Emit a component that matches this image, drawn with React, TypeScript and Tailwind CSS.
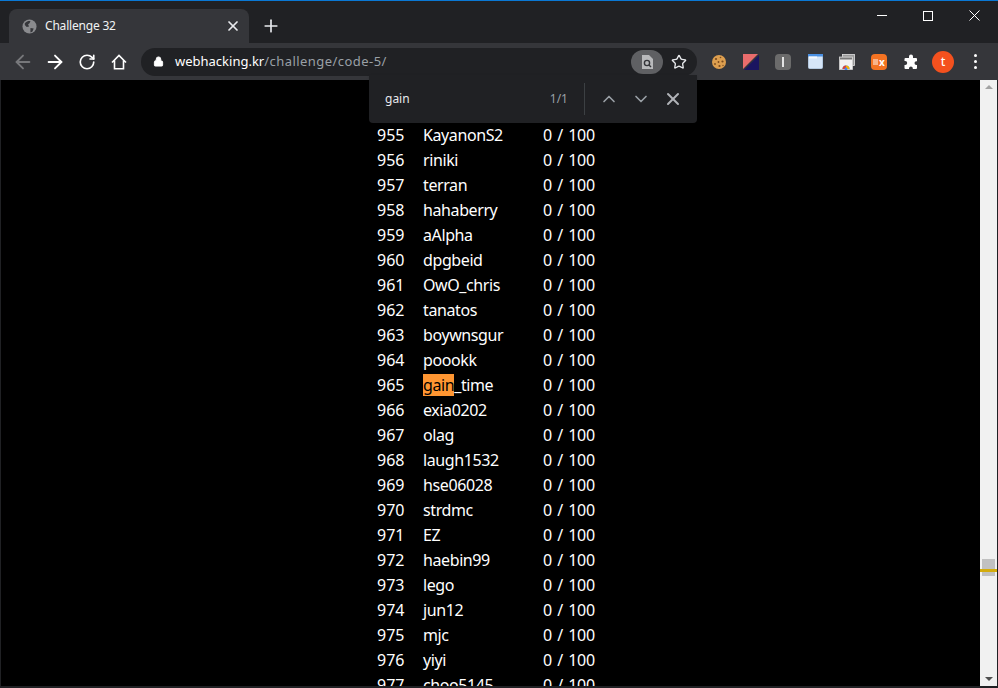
import React from 'react';
import { ArrowLeft, ArrowRight, RotateCw, Lock, Star, X, Plus, ChevronUp, ChevronDown } from 'lucide-react';

const rows: [number, string][] = [
  [955, 'KayanonS2'],
  [956, 'riniki'],
  [957, 'terran'],
  [958, 'hahaberry'],
  [959, 'aAlpha'],
  [960, 'dpgbeid'],
  [961, 'OwO_chris'],
  [962, 'tanatos'],
  [963, 'boywnsgur'],
  [964, 'poookk'],
  [965, 'gain_time'],
  [966, 'exia0202'],
  [967, 'olag'],
  [968, 'laugh1532'],
  [969, 'hse06028'],
  [970, 'strdmc'],
  [971, 'EZ'],
  [972, 'haebin99'],
  [973, 'lego'],
  [974, 'jun12'],
  [975, 'mjc'],
  [976, 'yiyi'],
  [977, 'choo5145'],
];

function ExtIcons() {
  return (
    <div className="flex items-center h-full">
      {/* cookie */}
      <div className="w-8 flex justify-center">
        <svg width="16" height="16" viewBox="0 0 16 16">
          <circle cx="8" cy="8" r="7" fill="#dd9f4f" />
          <circle cx="5" cy="5" r="1.1" fill="#7a4a1c" />
          <circle cx="9.5" cy="3.5" r="0.8" fill="#7a4a1c" />
          <circle cx="11.5" cy="7.5" r="1.1" fill="#7a4a1c" />
          <circle cx="7.5" cy="8" r="0.9" fill="#7a4a1c" />
          <circle cx="4" cy="10" r="0.9" fill="#7a4a1c" />
          <circle cx="8.5" cy="12" r="1.1" fill="#7a4a1c" />
          <circle cx="12" cy="11.5" r="0.7" fill="#7a4a1c" />
        </svg>
      </div>
      {/* split square */}
      <div className="w-8 flex justify-center">
        <svg width="16" height="16" viewBox="0 0 16 16">
          <polygon points="0,0 15,0 0,15" fill="#e96c6c" />
          <polygon points="16,1 16,16 1,16" fill="#1a1560" />
        </svg>
      </div>
      {/* I box */}
      <div className="w-8 flex justify-center">
        <div className="w-4 h-4 rounded-sm bg-[#6b6b6b] flex items-center justify-center">
          <div className="w-[2px] h-[10px] bg-[#e4e4e4]" />
        </div>
      </div>
      {/* window */}
      <div className="w-8 flex justify-center">
        <svg width="15" height="15" viewBox="0 0 15 15">
          <rect x="0.5" y="0.5" width="14" height="14" rx="1" fill="#d6e6f8" stroke="#b4c9df" />
          <rect x="0" y="0" width="15" height="2.5" fill="#4a90e2" />
          <rect x="1" y="2.5" width="8" height="2" fill="#f4f8fc" />
        </svg>
      </div>
      {/* stacked windows with chrome logo */}
      <div className="w-8 flex justify-center">
        <svg width="16" height="16" viewBox="0 0 16 16">
          <rect x="3.5" y="0.5" width="12" height="11" fill="#9a9a9a" stroke="#e0e0e0" strokeWidth="0.8" />
          <rect x="0.5" y="3" width="13" height="12.5" fill="#f2f2f2" stroke="#d0d0d0" strokeWidth="0.8" />
          <rect x="1" y="3.5" width="12" height="2" fill="#777777" />
          <path d="M3.5 15a3.5 3.5 0 0 1 7 0z" fill="#4285f4" />
          <path d="M3.5 15a3.5 3.5 0 0 1 3.5-3.5V15z" fill="#db4437" />
          <path d="M7 11.5a3.5 3.5 0 0 1 3.5 3.5H7z" fill="#f4b400" />
          <circle cx="7" cy="15" r="1.4" fill="#4285f4" />
        </svg>
      </div>
      {/* EX orange */}
      <div className="w-8 flex justify-center">
        <div className="w-4 h-4 rounded-sm bg-[#f47322] flex items-center justify-center gap-[1px] text-[10px] leading-none font-bold text-white">
          <span className="w-[5px] h-[6px] bg-[#f9b48a]" />
          <span>x</span>
        </div>
      </div>
      {/* puzzle */}
      <div className="w-8 flex justify-center">
        <svg width="16" height="16" viewBox="0 0 16 16" fill="#ffffff">
          <path d="M6 2.5a2 2 0 0 1 4 0V4h3a1 1 0 0 1 1 1v2.2h-.6a1.9 1.9 0 0 0 0 3.8h.6V14a1 1 0 0 1-1 1H9.8v-.7a1.9 1.9 0 0 0-3.8 0v.7H2.5a1 1 0 0 1-1-1v-3h.7a2 2 0 0 0 0-4h-.7V5a1 1 0 0 1 1-1H6z" />
        </svg>
      </div>
      {/* avatar */}
      <div className="w-8 flex justify-center">
        <div className="w-[22px] h-[22px] rounded-full bg-[#f4511e] text-white text-[12px] font-medium flex items-center justify-center">t</div>
      </div>
      <div className="w-8 flex justify-center">
        <div className="flex flex-col gap-[3px] ml-[1px]">
          <span className="w-[3px] h-[3px] rounded-full bg-white" />
          <span className="w-[3px] h-[3px] rounded-full bg-white" />
          <span className="w-[3px] h-[3px] rounded-full bg-white" />
        </div>
      </div>
    </div>
  );
}

export default function App() {
  return (
    <div className="w-[998px] h-[688px] relative overflow-hidden flex flex-col bg-[#202124] border-t border-[#0a78d4] font-['Noto_Sans','Open_Sans',sans-serif]">
      {/* Tab strip */}
      <div className="h-[42px] shrink-0 flex items-end bg-[#202124] pl-[9px]">
        <div className="w-[240px] h-[34px] bg-[#35363a] rounded-t-lg flex items-center pl-[13px] pr-[8px] text-white">
          <svg width="15" height="15" viewBox="0 0 16 16">
            <circle cx="8" cy="8" r="7.5" fill="#8a8b8e" />
            <path d="M3 4.5c2-2 4-2.5 6-2.2L8 4.5 6.5 5.5 7.5 8 5 8.5 3 6.5zM9 9.5l3.5.5-1.5 3.5-2 .8z" fill="#35363a" />
          </svg>
          <span className="ml-[8px] text-[12px] tracking-[-0.2px] flex-1 text-[#f1f3f4]">Challenge 32</span>
          <X size={16} strokeWidth={2.6} className="text-[#e8eaed]" />
        </div>
        <div className="ml-[12px] h-[34px] flex items-center">
          <Plus size={20} className="text-[#e8eaed]" strokeWidth={2} />
        </div>
        <div className="flex-1 self-start flex justify-end items-center text-white pt-[9px] pr-[1px]">
          <div className="w-[46px] flex justify-center"><div className="w-[10px] h-px bg-white" /></div>
          <div className="w-[46px] flex justify-center"><div className="w-[10px] h-[10px] border border-white" /></div>
          <div className="w-[46px] flex justify-center">
            <svg width="11" height="11" viewBox="0 0 11 11" stroke="#ffffff" strokeWidth="1">
              <path d="M0.5 0.5l10 10M10.5 0.5l-10 10" />
            </svg>
          </div>
        </div>
      </div>

      {/* Toolbar */}
      <div className="h-[37px] shrink-0 bg-[#35363a] flex items-center pl-[7px]">
        <div className="flex items-center">
          <div className="w-8 flex justify-center"><ArrowLeft size={22} className="text-[#77787b]" strokeWidth={2} /></div>
          <div className="w-8 flex justify-center"><ArrowRight size={22} className="text-white" strokeWidth={2} /></div>
          <div className="w-8 flex justify-center"><RotateCw size={18} className="text-white" strokeWidth={2.2} /></div>
          <div className="w-8 flex justify-center">
            <svg width="16" height="16" viewBox="0 0 16 16" fill="none" stroke="#ffffff" strokeWidth="1.6">
              <path d="M1 8.5L8 1.5l7 7M3.5 6.5v8.2h9V6.5" />
            </svg>
          </div>
        </div>
        <div className="ml-[6px] w-[556px] h-[28px] rounded-full bg-[#202124] flex items-center pl-[12px] pr-[4px]">
          <Lock size={11} className="text-white" fill="#ffffff" />
          <span className="ml-[11px] text-[13px] text-white">webhacking.kr<span className="text-[#9aa0a6] tracking-[0.45px]">/challenge/code-5/</span></span>
          <div className="ml-auto w-8 h-6 rounded-full bg-[#5f6063] flex items-center justify-center">
            <svg width="14" height="16" viewBox="0 0 14 16">
              <path d="M2 1h7l4 4v10H2z" fill="#b9babc" />
              <circle cx="7" cy="9" r="2.6" fill="none" stroke="#35363a" strokeWidth="1.4" />
              <path d="M9 11l2 2" stroke="#35363a" strokeWidth="1.4" />
            </svg>
          </div>
          <div className="w-[30px] flex justify-center pl-px"><Star size={16} className="text-[#e8eaed]" strokeWidth={2} /></div>
        </div>
        <div className="ml-[6px] h-full"><ExtIcons /></div>
      </div>

      {/* Page */}
      <div className="flex-1 min-h-0 flex bg-black border-l border-r border-b-2 border-[#202124]">
        <div className="flex-1 overflow-hidden pl-[376px] pt-[43px] text-[16px] leading-[25px] text-white">
          {rows.map(([rank, name]) => (
            <div key={rank} className="flex h-[25px] whitespace-nowrap">
              <span className="w-[46px]">{rank}</span>
              <span className="w-[120px] tracking-[-0.4px]">
                {name === 'gain_time' ? (
                  <>
                    <span className="bg-[#ff9632] text-black">gain</span>_time
                  </>
                ) : (
                  name
                )}
              </span>
              <span className="[word-spacing:1.5px] tracking-[-0.3px]">0 / 100</span>
            </div>
          ))}
        </div>
        {/* Scrollbar */}
        <div className="w-[17px] shrink-0 bg-[#f1f1f1] flex flex-col items-center justify-between py-[3px] relative">
          <div className="w-0 h-0 border-l-[4px] border-r-[4px] border-b-[4px] border-l-transparent border-r-transparent border-b-[#a3a3a3] mt-[2px]" />
          <div className="w-0 h-0 border-l-[4px] border-r-[4px] border-t-[4px] border-l-transparent border-r-transparent border-t-[#505050] mb-[2px]" />
          <div className="absolute left-[2px] top-[479px] w-[13px] h-[17px] bg-[#c1c1c1]" />
          <div className="absolute left-0 top-[489px] w-[17px] h-[3px] bg-[#d4ac0d]" />
        </div>
      </div>

      {/* Find bar */}
      <div className="absolute left-[369px] top-[74px] w-[328px] h-[48px] bg-[#202124] rounded-b-sm flex items-center pl-[16px] pr-[8px] shadow-sm">
        <span className="text-[12px] text-[#e8eaed] flex-1">gain</span>
        <span className="text-[12px] text-[#9aa0a6]">1/1</span>
        <div className="w-px h-8 bg-[#3c4043] ml-[16px] mr-[8px]" />
        <div className="w-8 flex justify-center"><ChevronUp size={20} className="text-[#9aa0a6]" strokeWidth={2} /></div>
        <div className="w-8 flex justify-center"><ChevronDown size={20} className="text-[#9aa0a6]" strokeWidth={2} /></div>
        <div className="w-8 flex justify-center"><X size={20} className="text-[#b0b3b8]" strokeWidth={2.4} /></div>
      </div>
    </div>
  );
}
